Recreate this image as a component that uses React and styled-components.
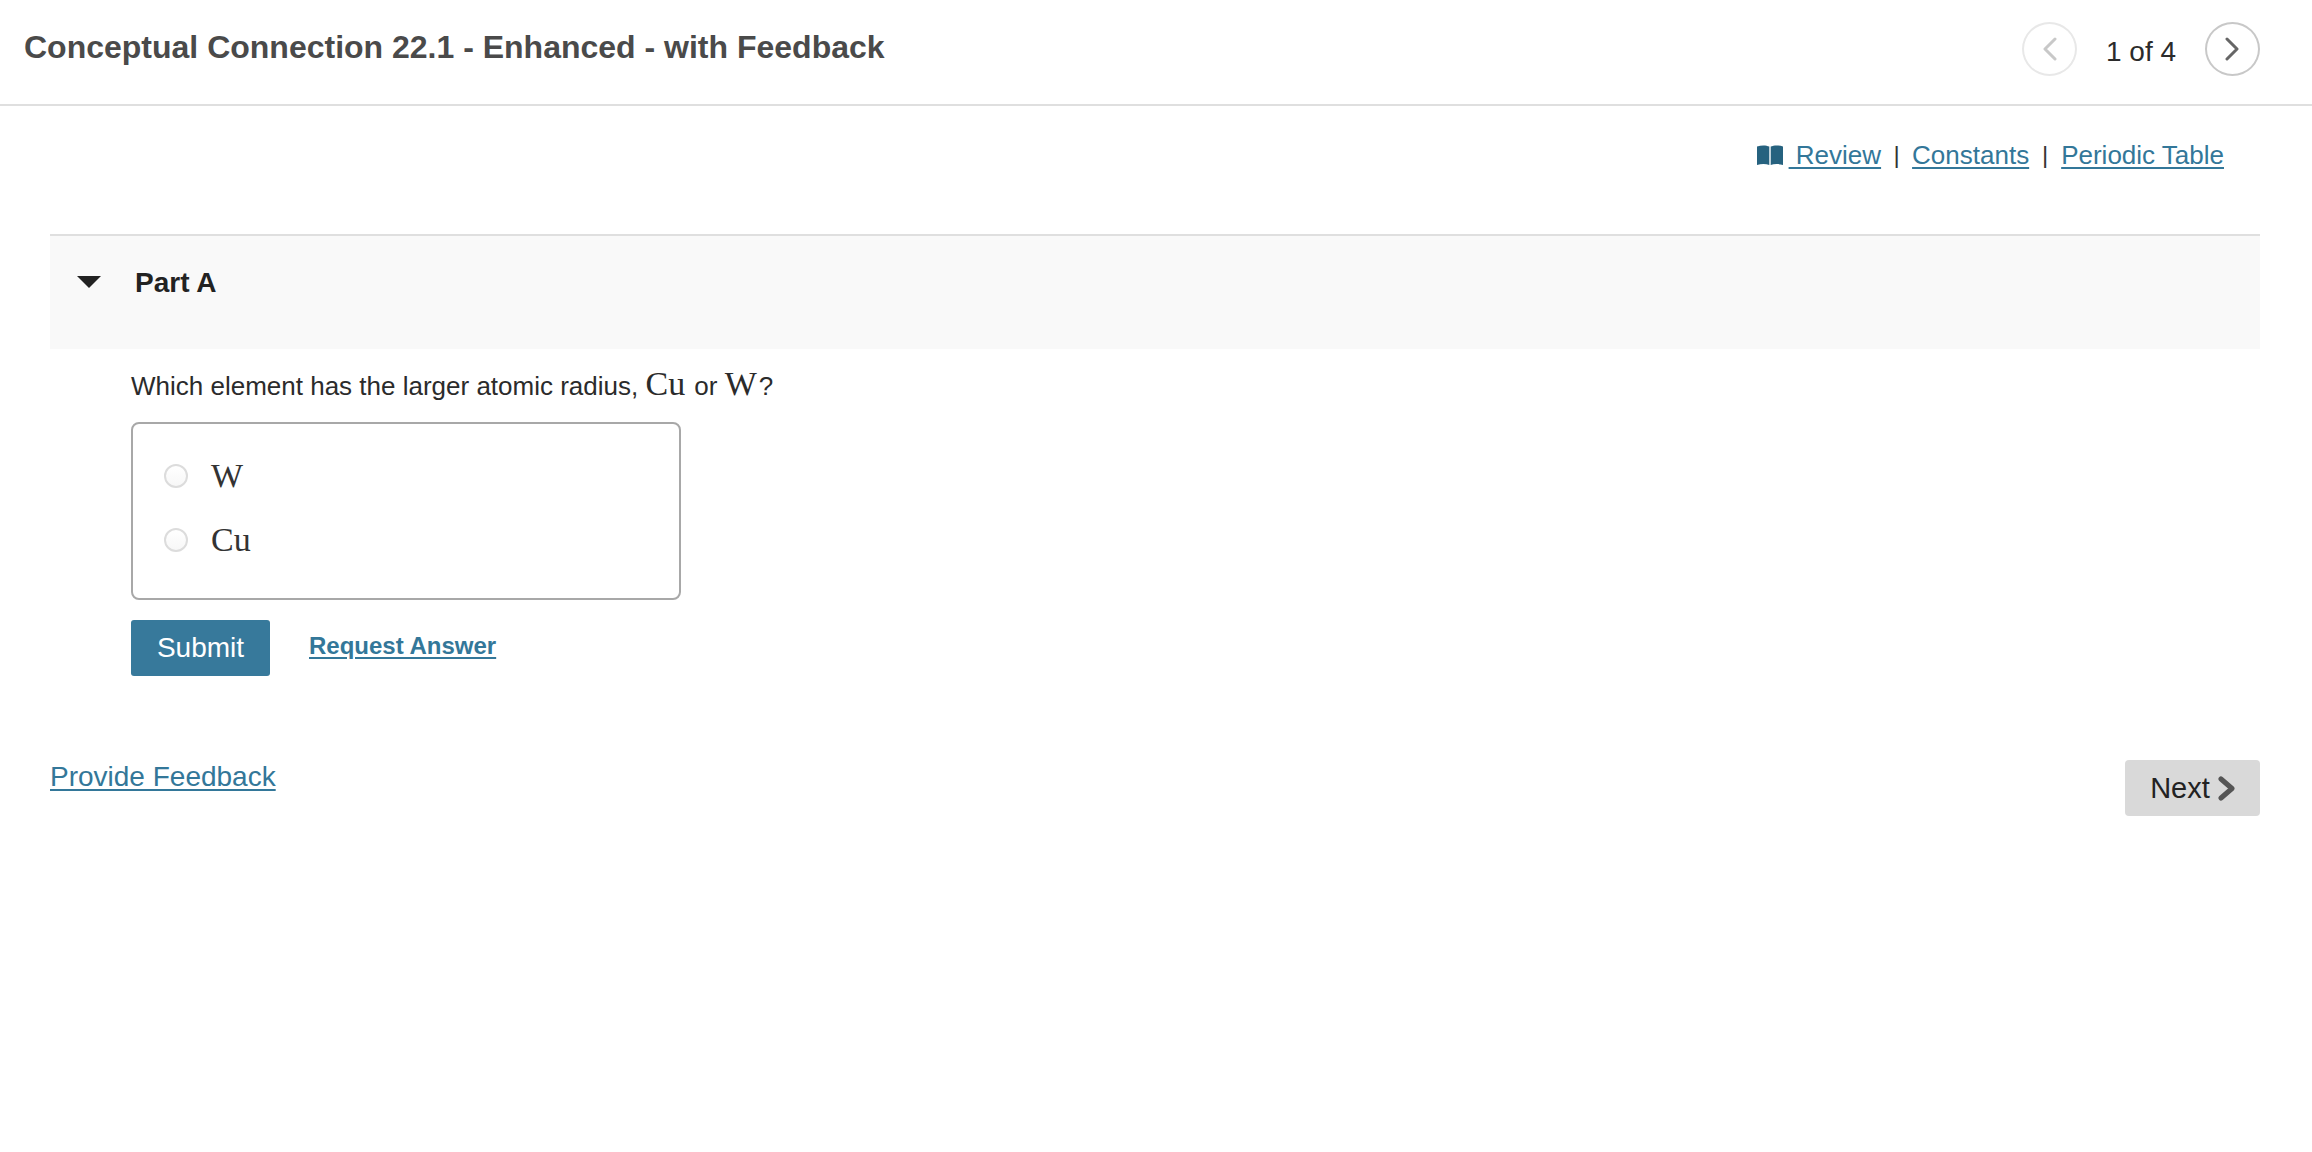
import React from "react";
import styled, { createGlobalStyle } from "styled-components";

const Global = createGlobalStyle`
  html, body { margin: 0; padding: 0; background: #fff; }
  body { font-family: "Liberation Sans", Arial, sans-serif; color: #222; }
`;

const Page = styled.div`
  width: 2312px;
  min-height: 1152px;
  background: #fff;
`;

const Header = styled.header`
  box-sizing: border-box;
  border-bottom: 2px solid #dfdfdf;
  height: 106px;
  padding: 0 52px 0 24px;
  display: flex;
  justify-content: space-between;
  align-items: flex-start;
`;

const Title = styled.h1`
  margin: 27px 0 0;
  font-size: 32px;
  line-height: 40px;
  font-weight: 700;
  color: #4a4a4a;
`;

const Pager = styled.nav`
  display: flex;
  align-items: center;
  margin-top: 22px;
`;

const RoundButton = styled.button`
  width: 55px;
  height: 54px;
  padding: 0;
  border-radius: 50%;
  background: #fff;
  border: 2px solid ${(p) => (p.$disabled ? "#e8e8e8" : "#c8c8c8")};
  color: ${(p) => (p.$disabled ? "#c8c8c8" : "#666")};
  display: flex;
  align-items: center;
  justify-content: center;
`;

const PageCount = styled.span`
  width: 128px;
  text-align: center;
  font-size: 28px;
  line-height: 34px;
  color: #2b2b2b;
  position: relative;
  top: 3px;
`;

const Body = styled.main`
  padding: 0 52px 0 50px;
`;

const LinkBar = styled.div`
  display: flex;
  justify-content: flex-end;
  align-items: center;
  height: 32px;
  margin-top: 33px;
  padding-right: 36px;
  font-size: 26px;
  line-height: 32px;
`;

const TextLink = styled.a`
  color: #337799;
  text-decoration: underline;
  text-underline-offset: 3px;
  text-decoration-thickness: 2px;
  cursor: pointer;
`;

const Separator = styled.span`
  width: ${(p) => p.$width}px;
  text-align: center;
  color: #333;
  font-size: 24px;
`;

const PartPanel = styled.section`
  margin-top: 63px;
`;

const PartHeader = styled.div`
  height: 115px;
  box-sizing: border-box;
  background: #f9f9f9;
  border-top: 2px solid #dfdfdf;
  display: flex;
  align-items: flex-start;
  padding: 30px 0 0 27px;
`;

const Caret = styled.span`
  width: 0;
  height: 0;
  margin-top: 10px;
  border-left: 12px solid transparent;
  border-right: 12px solid transparent;
  border-top: 12px solid #222;
`;

const PartTitle = styled.h2`
  margin: 0 0 0 34px;
  font-size: 28px;
  line-height: 34px;
  font-weight: 700;
  color: #222;
`;

const PartBody = styled.div`
  padding-left: 81px;
`;

const Question = styled.p`
  margin: 15px 0 0;
  font-size: 26px;
  line-height: 40px;
  color: #2b2b2b;
`;

const Formula = styled.span`
  font-family: "Liberation Serif", "Times New Roman", serif;
  font-size: 34px;
  margin-right: ${(p) => p.$after || 0}px;
`;

const Choices = styled.div`
  width: 550px;
  height: 178px;
  box-sizing: border-box;
  margin-top: 16px;
  border: 2px solid #a8a8a8;
  border-radius: 8px;
  padding: 40px 0 0 31px;
  display: flex;
  flex-direction: column;
  gap: 40px;
`;

const Choice = styled.label`
  display: flex;
  align-items: center;
  height: 24px;
  gap: 23px;
`;

const Radio = styled.span`
  width: 24px;
  height: 24px;
  box-sizing: border-box;
  border-radius: 50%;
  border: 2px solid #dcdcdc;
  background: linear-gradient(#fff, #f7f7f7);
`;

const ChoiceText = styled.span`
  font-family: "Liberation Serif", "Times New Roman", serif;
  font-size: 34px;
  line-height: 36px;
  color: #333;
`;

const Actions = styled.div`
  display: flex;
  align-items: flex-start;
  margin-top: 20px;
  gap: 39px;
`;

const SubmitButton = styled.button`
  width: 139px;
  height: 56px;
  border: 0;
  border-radius: 3px;
  background: #37799b;
  color: #fff;
  font-family: inherit;
  font-size: 28px;
  padding: 0;
`;

const RequestLink = styled(TextLink)`
  font-weight: 700;
  font-size: 24px;
  line-height: 30px;
  margin-top: 11px;
`;

const Footer = styled.div`
  display: flex;
  justify-content: space-between;
  align-items: flex-start;
  margin-top: 84px;
`;

const FeedbackLink = styled(TextLink)`
  font-size: 28px;
  line-height: 34px;
`;

const NextButton = styled.button`
  width: 135px;
  height: 56px;
  border: 0;
  border-radius: 4px;
  background: #d9d9d9;
  color: #222;
  font-family: inherit;
  font-size: 29px;
  padding: 0;
  display: flex;
  align-items: center;
  justify-content: center;
  gap: 8px;
`;

const BookIcon = styled.svg`
  margin-right: 6px;
`;

const Chevron = ({ dir }) => (
  <svg width="15" height="24" viewBox="0 0 15 24" fill="none" stroke="currentColor" strokeWidth="3" strokeLinecap="round" strokeLinejoin="round" aria-hidden="true">
    <path d={dir === "left" ? "M13 2 L3 12 L13 22" : "M2 2 L12 12 L2 22"} />
  </svg>
);

const Book = () => (
  <BookIcon width="26" height="21" viewBox="0 0 26 21" aria-hidden="true">
    <path d="M0 1.5 C4 0 9 0 12.3 1.5 V20 C9 18.8 4 18.8 0 20 Z" fill="#26627f" />
    <path d="M26 1.5 C22 0 17 0 13.7 1.5 V20 C17 18.8 22 18.8 26 20 Z" fill="#26627f" />
  </BookIcon>
);

const NextChevron = () => (
  <svg width="17" height="25" viewBox="0 0 17 25" fill="none" stroke="#555" strokeWidth="5" strokeLinecap="round" strokeLinejoin="round" aria-hidden="true">
    <path d="M3 3 L14 12.5 L3 22" />
  </svg>
);

export default function App() {
  return (
    <Page>
      <Global />
      <Header>
        <Title>Conceptual Connection 22.1 - Enhanced - with Feedback</Title>
        <Pager>
          <RoundButton $disabled aria-label="Previous"><Chevron dir="left" /></RoundButton>
          <PageCount>1 of 4</PageCount>
          <RoundButton aria-label="Next"><Chevron dir="right" /></RoundButton>
        </Pager>
      </Header>
      <Body>
        <LinkBar>
          <Book />
          <TextLink>&nbsp;Review</TextLink>
          <Separator $width={31}>|</Separator>
          <TextLink>Constants</TextLink>
          <Separator $width={32}>|</Separator>
          <TextLink>Periodic Table</TextLink>
        </LinkBar>
        <PartPanel>
          <PartHeader>
            <Caret />
            <PartTitle>Part A</PartTitle>
          </PartHeader>
          <PartBody>
            <Question>
              Which element has the larger atomic radius, <Formula $after={2}>Cu</Formula> or <Formula $after={2}>W</Formula>?
            </Question>
            <Choices>
              <Choice><Radio /><ChoiceText>W</ChoiceText></Choice>
              <Choice><Radio /><ChoiceText>Cu</ChoiceText></Choice>
            </Choices>
            <Actions>
              <SubmitButton>Submit</SubmitButton>
              <RequestLink>Request Answer</RequestLink>
            </Actions>
          </PartBody>
        </PartPanel>
        <Footer>
          <FeedbackLink>Provide Feedback</FeedbackLink>
          <NextButton>Next<NextChevron /></NextButton>
        </Footer>
      </Body>
    </Page>
  );
}
